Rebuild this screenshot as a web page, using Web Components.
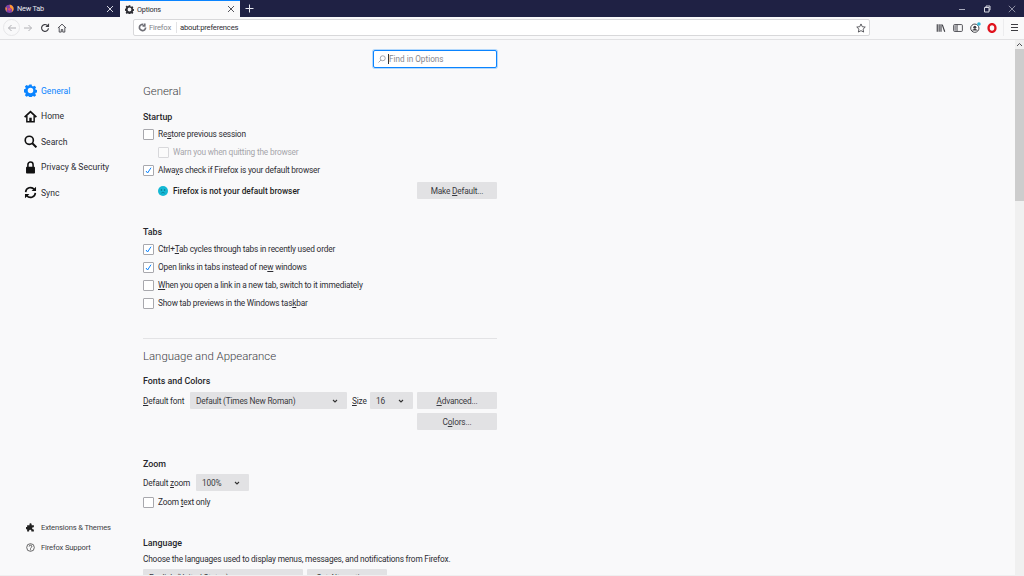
<!DOCTYPE html>
<html lang="en">
<head>
<meta charset="utf-8">
<title>Options</title>
<style>
  html, body { margin: 0; height: 576px; overflow: hidden; }
  body {
    font-family: Roboto, "Open Sans", sans-serif;
    font-size: 8.300px;
    letter-spacing: -0.19px;
    white-space: nowrap;
    color: #2d2d33;
    background: #f9f9fa;
    display: flex;
    flex-direction: column;
  }
  u { text-underline-offset: 1px; text-decoration-thickness: 0.6px; }
</style>
</head>
<body>
<ff-tabbar></ff-tabbar>
<ff-toolbar></ff-toolbar>
<ff-content>
  <ff-sidebar slot="side"></ff-sidebar>
  <ff-search slot="search"></ff-search>

  <ff-h1 style="--top:15px">General</ff-h1>
  <ff-h2 style="--top:10px">Startup</ff-h2>
  <ff-check style="--top:1px"><span>Re<u>s</u>tore previous session</span></ff-check>
  <ff-check disabled indent><span>Warn you when quitting the browser</span></ff-check>
  <ff-check checked><span>Alwa<u>y</u>s check if Firefox is your default browser</span></ff-check>
  <ff-row style="--top:3px">
    <ff-sad-note>Firefox is not your default browser</ff-sad-note>
    <ff-button>Make&nbsp;<u>D</u>efault...</ff-button>
  </ff-row>

  <ff-h2 style="--top:26px">Tabs</ff-h2>
  <ff-check checked style="--top:1px"><span>Ctrl+<u>T</u>ab cycles through tabs in recently used order</span></ff-check>
  <ff-check checked><span>Open links in tabs instead of ne<u>w</u> windows</span></ff-check>
  <ff-check><span><u>W</u>hen you open a link in a new tab, switch to it immediately</span></ff-check>
  <ff-check><span>Show tab previews in the Windows tas<u>k</u>bar</span></ff-check>

  <ff-divider style="--top:26px"></ff-divider>
  <ff-h1 style="--top:9px">Language and Appearance</ff-h1>
  <ff-h2 style="--top:9px">Fonts and Colors</ff-h2>
  <ff-row style="--top:4px">
    <span style="width:47px"><u>D</u>efault font</span>
    <ff-select style="--w:157px">Default (Times New Roman)</ff-select>
    <span style="width:23px;padding-left:5px;box-sizing:border-box"><u>S</u>ize</span>
    <ff-select style="--w:43px">16</ff-select>
    <ff-button style="--ml:4px"><u>A</u>dvanced...</ff-button>
  </ff-row>
  <ff-row style="--top:4px;justify-content:flex-end">
    <ff-button>C<u>o</u>lors...</ff-button>
  </ff-row>

  <ff-h2 style="--top:27px">Zoom</ff-h2>
  <ff-row style="--top:3px">
    <span style="width:53px">Default <u>z</u>oom</span>
    <ff-select style="--w:53px">100%</ff-select>
  </ff-row>
  <ff-check style="--top:2px"><span>Zoom <u>t</u>ext only</span></ff-check>

  <ff-h2 style="--top:25px">Language</ff-h2>
  <ff-row style="--top:1px;--h:15px"><span>Choose the languages used to display menus, messages, and notifications from Firefox.</span></ff-row>
  <ff-row style="--top:3px">
    <ff-select style="--w:160px">English (United States)</ff-select>
    <ff-button style="--ml:4px">Set Alternatives...</ff-button>
  </ff-row>
</ff-content>

<script>
const GEAR = 'M6.600 .5h2.800l.4 2 1.300.6 1.800-1.100 2 2-1.100 1.800.6 1.300 2 .4v2.800l-2 .4-.6 1.300 1.100 1.800-2 2-1.800-1.100-1.300.6-.4 2H6.600l-.4-2-1.300-.6-1.800 1.100-2-2 1.100-1.800-.6-1.300-2-.4V6.600l2-.4.6-1.300L1.100 3.100l2-2 1.800 1.100 1.300-.6zM8 4.600a3.400 3.400 0 1 0 0 6.800 3.400 3.400 0 0 0 0-6.800z';

class FfElement extends HTMLElement {
  constructor() {
    super();
    this.attachShadow({ mode: 'open' });
    this.shadowRoot.innerHTML = this.markup();
  }
  markup() { return ''; }
}

class FfTabbar extends FfElement {
  markup() {
    return `
      <style>
        :host { display: flex; height: 17px; background: #1f2144; color: #e6e7ee; flex: none; align-items: stretch; }
        .tab { width: 119px; display: flex; align-items: center; padding-left: 5px; box-sizing: border-box; gap: 3px; }
        .tab.active { width: 120px; margin-left: 1px; background: #f9f9fa; color: #2d2d33; border-top: 1px solid #0a84ff; }
        .tab span { flex: 1; font-size: 7.300px; letter-spacing: -0.2px; }
        .x { width: 8px; height: 8px; margin-right: 5px; }
        .plus { width: 18px; display: flex; align-items: center; justify-content: center; }
        .win { margin-left: auto; display: flex; align-items: center; gap: 17px; padding-right: 8px; }
        svg { display: block; }
      </style>
      <div class="tab">
        <svg width="9" height="9" viewBox="0 0 16 16"><circle cx="8" cy="8.500" r="7.300" fill="#7b3fa8"/><path d="M8.500 1C13 2 15.500 5.500 15.300 9c-.3 3-2 5-4.300 6 2-2 2-5 .3-6.800C10 6.800 8 6.500 8.500 1zM1 6c-.6 3 .3 6 2.500 8-1-2-.8-4 .2-5.500C3 7.500 2 6.500 2 5z" fill="#ff9a2e"/><circle cx="8" cy="9.500" r="2.500" fill="#d8457a"/></svg>
        <span>New Tab</span>
        <svg class="x" viewBox="0 0 8 8"><path d="M1 1l6 6M7 1L1 7" stroke="#d6d7e0" stroke-width="1" fill="none"/></svg>
      </div>
      <div class="tab active">
        <svg width="9" height="9" viewBox="0 0 16 16"><path fill-rule="evenodd" fill="#2d2d33" d="${GEAR}"/></svg>
        <span>Options</span>
        <svg class="x" viewBox="0 0 8 8"><path d="M1 1l6 6M7 1L1 7" stroke="#55555c" stroke-width="1" fill="none"/></svg>
      </div>
      <div class="plus"><svg width="9" height="9" viewBox="0 0 9 9"><path d="M4.500 .5v8M.5 4.500h8" stroke="#e6e7ee" stroke-width="1" fill="none"/></svg></div>
      <div class="win">
        <svg width="8" height="8" viewBox="0 0 8 8"><path d="M1 4.500h6" stroke="#a9abbd" stroke-width="1"/></svg>
        <svg width="8" height="8" viewBox="0 0 8 8"><path d="M1.500 2.500h4.500v4.500h-4.500zM3 2.500v-1.500h4v4h-1" stroke="#d6d7e0" stroke-width="1" fill="none"/></svg>
        <svg width="8" height="8" viewBox="0 0 8 8"><path d="M.8 .8l6.400 6.400M7.200 .8L.8 7.200" stroke="#a9abbd" stroke-width=".8" fill="none"/></svg>
      </div>`;
  }
}

class FfToolbar extends FfElement {
  markup() {
    const s = 'stroke="#3c3c42" stroke-width="1.400" fill="none"';
    return `
      <style>
        :host { display: flex; align-items: center; height: 23px; box-sizing: border-box; background: #f9f9fa; border-bottom: 1px solid #e1e1e3; flex: none; padding: 0 0 1px 3px; }
        svg { display: block; flex: none; }
        .back { width: 17px; height: 17px; box-sizing: border-box; border: 1px solid #e7e7e9; border-radius: 50%; display: flex; align-items: center; justify-content: center; background: #f9f9fa; }
        .url { margin-left: 66px; width: 737px; height: 17px; box-sizing: border-box; background: #fff; border: 1px solid #d8d8da; border-radius: 2px; display: flex; align-items: center; padding: 0 3px 0 4px; font-size: 7.700px; letter-spacing: -0.22px; }
        .brand { color: #83838a; margin-left: 2px; padding-right: 5px; border-right: 1px solid #e3e3e5; line-height: 11px; }
        .addr { margin-left: 3px; flex: 1; color: #2d2d33; }
        .icons { display: flex; margin-left: 66px; align-items: center; }
      </style>
      <div class="back"><svg width="10" height="10" viewBox="0 0 10 10"><path d="M9 5H1.500M4.500 2L1.500 5l3 3" stroke="#aeaeb3" stroke-width="1" fill="none"/></svg></div>
      <svg style="margin-left:3px" width="10" height="10" viewBox="0 0 10 10"><path d="M1 5h7.500M5.500 2l3 3-3 3" stroke="#b2b2b6" stroke-width="1" fill="none"/></svg>
      <svg style="margin-left:7px" width="10" height="10" viewBox="0 0 16 16"><path d="M13.500 8.500a5.500 5.500 0 1 1-2-4.800" stroke="#3c3c42" stroke-width="1.800" fill="none"/><path d="M14.500 .5v6h-6z" fill="#3c3c42"/></svg>
      <svg style="margin-left:7px" width="10" height="10" viewBox="0 0 16 16"><path d="M1.500 8L8 1.800 14.500 8M3.500 7v7.500h3.300v-4h2.400v4h3.300V7" ${s}/></svg>
      <div class="url">
        <svg width="9" height="9" viewBox="0 0 16 16"><path d="M13.500 8a5.500 5.500 0 1 1-4-5.300M12 1v4H8" stroke="#6f6f76" stroke-width="3" fill="none"/></svg>
        <span class="brand">Firefox</span>
        <span class="addr">about:preferences</span>
        <svg width="10" height="10" viewBox="0 0 16 16"><path d="M8 1.500l2 4.400 4.800.6-3.500 3.300.9 4.700L8 12.200l-4.200 2.300.9-4.700L1.200 6.500 6 5.900z" stroke="#3c3c42" stroke-width="1.300" fill="none"/></svg>
      </div>
      <div class="icons">
        <svg width="10" height="10" viewBox="0 0 16 16"><path d="M2 2v12M5 2v12M8 2v12" stroke="#3c3c42" stroke-width="1.800"/><path d="M10 2.500l4 11.500" stroke="#3c3c42" stroke-width="1.800"/></svg>
        <svg style="margin-left:7px" width="10" height="10" viewBox="0 0 16 16"><rect x="1" y="2.500" width="14" height="11" rx="1.500" ${s}/><path d="M6.500 2.500v11" ${s}/><rect x="2" y="3.500" width="4" height="9" fill="#9b9ba0"/></svg>
        <svg style="margin-left:7px" width="11" height="11" viewBox="0 0 16 16"><circle cx="7" cy="9" r="6" fill="#fff" ${s}/><circle cx="7" cy="7.500" r="2.200" fill="#3c3c42"/><path d="M3 12.500c1-3 7-3 8 0z" fill="#3c3c42"/><circle cx="13" cy="3" r="2.600" fill="#2fb6d6"/></svg>
        <svg style="margin-left:6px" width="10" height="10" viewBox="0 0 16 16"><ellipse cx="8" cy="8" rx="5.500" ry="6.200" fill="none" stroke="#e0121d" stroke-width="3.800"/></svg>
        <div style="width:1px;height:17px;background:#ececee;margin-left:6px"></div>
        <svg style="margin-left:6px" width="9" height="9" viewBox="0 0 9 9"><path d="M1 1.500h7M1 4.500h7M1 7.500h7" stroke="#3c3c42" stroke-width="1"/></svg>
      </div>`;
  }
}

class FfContent extends FfElement {
  markup() {
    return `
      <style>
        :host { display: flex; flex: 1; min-height: 0; overflow: hidden; position: relative; }
        .side { width: 143px; flex: none; }
        .main { width: 354px; flex: none; display: block; }
        .spacer { flex: 1; }
        .scroll { width: 9px; flex: none; background: #f0f0f0; display: flex; flex-direction: column; align-items: center; }
        .arrow { height: 9px; flex: none; display: flex; align-items: center; }
        .thumb { width: 100%; height: 152px; flex: none; background: #cdcdcd; }
        .edge { position: absolute; left: 0; right: 0; bottom: 0; height: 1px; background: #efeff0; }
      </style>
      <div class="side"><slot name="side"></slot></div>
      <div class="main">
        <slot name="search"></slot>
        <slot></slot>
      </div>
      <div class="spacer"></div>
      <div class="scroll">
        <div class="arrow"><svg width="7" height="5" viewBox="0 0 7 5"><path d="M1 4l2.500-2.500L6 4" stroke="#505055" stroke-width="1" fill="none"/></svg></div>
        <div class="thumb"></div>
      </div>
      <div class="edge"></div>`;
  }
}

class FfSidebar extends FfElement {
  markup() {
    return `
      <style>
        :host { display: flex; flex-direction: column; height: 536px; box-sizing: border-box; padding: 38px 0 0 24px; letter-spacing: 0; }
        .nav { display: flex; flex-direction: column; }
        .foot { margin-top: auto; display: flex; flex-direction: column; gap: 9px; padding: 0 0 23px 2px; font-size: 7.600px; letter-spacing: -0.15px; }
        .item { display: flex; align-items: center; height: 25.500px; font-size: 8.600px; }
        .item svg { width: 13px; height: 13px; margin-right: 4px; flex: none; }
        .item.on { color: #0a84ff; }
        .small { display: flex; align-items: center; height: 11px; color: #3d3d44; }
        .small svg { width: 9px; height: 9px; margin-right: 6px; flex: none; }
      </style>
      <div class="nav">
        <div class="item on"><svg viewBox="0 0 16 16"><path fill="#0a84ff" fill-rule="evenodd" d="${GEAR}"/></svg>General</div>
        <div class="item"><svg viewBox="0 0 16 16"><path d="M.8 8.800L8 2l7.200 6.800" fill="none" stroke="#111" stroke-width="2.200"/><path d="M3.500 7.500v7h9v-7" fill="none" stroke="#111" stroke-width="1.800"/><rect x="6.500" y="9.500" width="3" height="5" fill="#111"/></svg>Home</div>
        <div class="item"><svg viewBox="0 0 16 16"><circle cx="6.500" cy="6.500" r="5" fill="none" stroke="#111" stroke-width="2"/><path d="M10.200 10.200l5 5" stroke="#111" stroke-width="2.400"/></svg>Search</div>
        <div class="item"><svg viewBox="0 0 16 16"><rect x="2.500" y="7" width="11" height="8.500" rx="1" fill="#111"/><path d="M4.800 7.500V4.500a3.200 3.200 0 0 1 6.400 0v3" fill="none" stroke="#111" stroke-width="1.900"/></svg>Privacy &amp; Security</div>
        <div class="item"><svg viewBox="0 0 16 16"><path d="M2 7.500A6 6 0 0 1 12.700 4.300M14 8.500A6 6 0 0 1 3.300 11.700" fill="none" stroke="#111" stroke-width="2"/><path fill="#111" d="M14.800 .8v5.500H9.300zM1.200 15.200V9.700h5.500z"/></svg>Sync</div>
      </div>
      <div class="foot">
        <div class="small"><svg viewBox="0 0 16 16"><path fill="#222" d="M6.500 1a2 2 0 0 1 3.500 1.500V4h4v3.500h-1.200a2 2 0 0 0 0 4H14V15H9.500v-1.200a2 2 0 0 0-4 0V15H2v-4H.8a2 2 0 0 1 0-4H2V4h4.200V2.500z"/></svg>Extensions &amp; Themes</div>
        <div class="small"><svg viewBox="0 0 16 16"><circle cx="8" cy="8" r="6.800" fill="none" stroke="#444" stroke-width="1.400"/><path d="M5.600 6.300a2.400 2.400 0 1 1 3.600 2c-.8.500-1.200.9-1.200 1.800" fill="none" stroke="#444" stroke-width="1.500"/><circle cx="8" cy="12" r="1" fill="#444"/></svg>Firefox Support</div>
      </div>`;
  }
}

class FfSearch extends FfElement {
  markup() {
    return `
      <style>
        :host { display: flex; justify-content: flex-end; padding-top: 10px; letter-spacing: 0; }
        .box { width: 124px; height: 18px; box-sizing: border-box; border: 1.500px solid #0a84ff; border-radius: 2px; box-shadow: 0 0 0 1px #b4d8fb; background: #fff; display: flex; align-items: center; padding-left: 4px; color: #87878d; font-size: 8.200px; }
        svg { width: 8px; height: 8px; margin-right: 2px; }
        i { width: 1px; height: 10px; background: #333; }
      </style>
      <div class="box">
        <svg viewBox="0 0 16 16"><circle cx="9.500" cy="6.500" r="5" fill="none" stroke="#8a8a90" stroke-width="1.500"/><path d="M6 10l-5 5" stroke="#8a8a90" stroke-width="1.500"/></svg>
        <i></i><span>Find in Options</span>
      </div>`;
  }
}

class FfH1 extends FfElement {
  markup() {
    return `
      <style>
        :host { display: block; margin-top: var(--top, 0); height: 17px; line-height: 17px; font-size: 11.400px; font-weight: 300; letter-spacing: 0; color: #3d3d44; }
      </style>
      <slot></slot>`;
  }
}

class FfH2 extends FfElement {
  markup() {
    return `
      <style>
        :host { display: block; margin-top: var(--top, 0); height: 14px; line-height: 15px; font-size: 8.900px; font-weight: 500; letter-spacing: 0; color: #26262b; }
      </style>
      <slot></slot>`;
  }
}

class FfCheck extends FfElement {
  markup() {
    return `
      <style>
        :host { display: flex; align-items: center; height: 18px; margin-top: var(--top, 0); }
        :host([indent]) { padding-left: 15px; }
        :host([disabled]) { color: #a6a6ab; }
        .box { width: 11px; height: 11px; box-sizing: border-box; border: 1px solid #a8a8ad; border-radius: 1px; background: #fff; margin-right: 4px; flex: none; display: flex; }
        :host([disabled]) .box { border-color: #d8d8db; background: #fbfbfb; }
        svg { display: none; width: 9px; height: 9px; }
        :host([checked]) svg { display: block; }
      </style>
      <div class="box"><svg viewBox="0 0 9 9"><path d="M2 5l1.600 2L7 1.700" stroke="#0a84ff" stroke-width="1" fill="none"/></svg></div>
      <slot></slot>`;
  }
}

class FfRow extends FfElement {
  markup() {
    return `
      <style>
        :host { display: flex; align-items: center; justify-content: flex-start; height: var(--h, 17px); margin-top: var(--top, 0); }
      </style>
      <slot></slot>`;
  }
}

class FfSadNote extends FfElement {
  markup() {
    return `
      <style>
        :host { display: flex; align-items: center; font-weight: 500; letter-spacing: 0; padding-left: 15px; margin-right: auto; color: #1f1f24; }
        svg { width: 10px; height: 10px; margin-right: 5px; flex: none; }
      </style>
      <svg viewBox="0 0 10 10"><circle cx="5" cy="5" r="5" fill="#14b8d4"/><circle cx="3.400" cy="4" r=".7" fill="#0b6b85"/><circle cx="6.600" cy="4" r=".7" fill="#0b6b85"/><path d="M3.300 7.200c1-.9 2.400-.9 3.400 0" stroke="#0b6b85" stroke-width=".7" fill="none"/></svg>
      <slot></slot>`;
  }
}

class FfButton extends FfElement {
  markup() {
    return `
      <style>
        :host { display: flex; align-items: center; justify-content: center; width: 80px; height: 17px; background: #e2e2e4; color: #3a3a40; margin-left: var(--ml, 0); flex: none; border-radius: 1px; }
      </style>
      <slot></slot>`;
  }
}

class FfSelect extends FfElement {
  markup() {
    return `
      <style>
        :host { display: flex; align-items: center; width: var(--w, 80px); height: 17px; box-sizing: border-box; padding: 0 9px 0 6px; background: #e2e2e4; color: #3a3a40; margin-left: var(--ml, 0); flex: none; border-radius: 1px; }
        .t { flex: 1; white-space: nowrap; }
        svg { width: 6px; height: 4px; flex: none; }
      </style>
      <span class="t"><slot></slot></span>
      <svg viewBox="0 0 6 4"><path d="M1 1l2 2 2-2" stroke="#333" stroke-width="1.100" fill="none"/></svg>`;
  }
}

class FfDivider extends FfElement {
  markup() {
    return `<style>:host { display: block; height: 1px; background: #e3e3e5; margin-top: var(--top, 0); }</style>`;
  }
}

const defs = {
  'ff-tabbar': FfTabbar, 'ff-toolbar': FfToolbar, 'ff-content': FfContent, 'ff-sidebar': FfSidebar,
  'ff-search': FfSearch, 'ff-h1': FfH1, 'ff-h2': FfH2, 'ff-check': FfCheck, 'ff-row': FfRow,
  'ff-sad-note': FfSadNote, 'ff-button': FfButton, 'ff-select': FfSelect, 'ff-divider': FfDivider
};
Object.entries(defs).forEach(([name, cls]) => customElements.define(name, cls));
</script>
</body>
</html>
